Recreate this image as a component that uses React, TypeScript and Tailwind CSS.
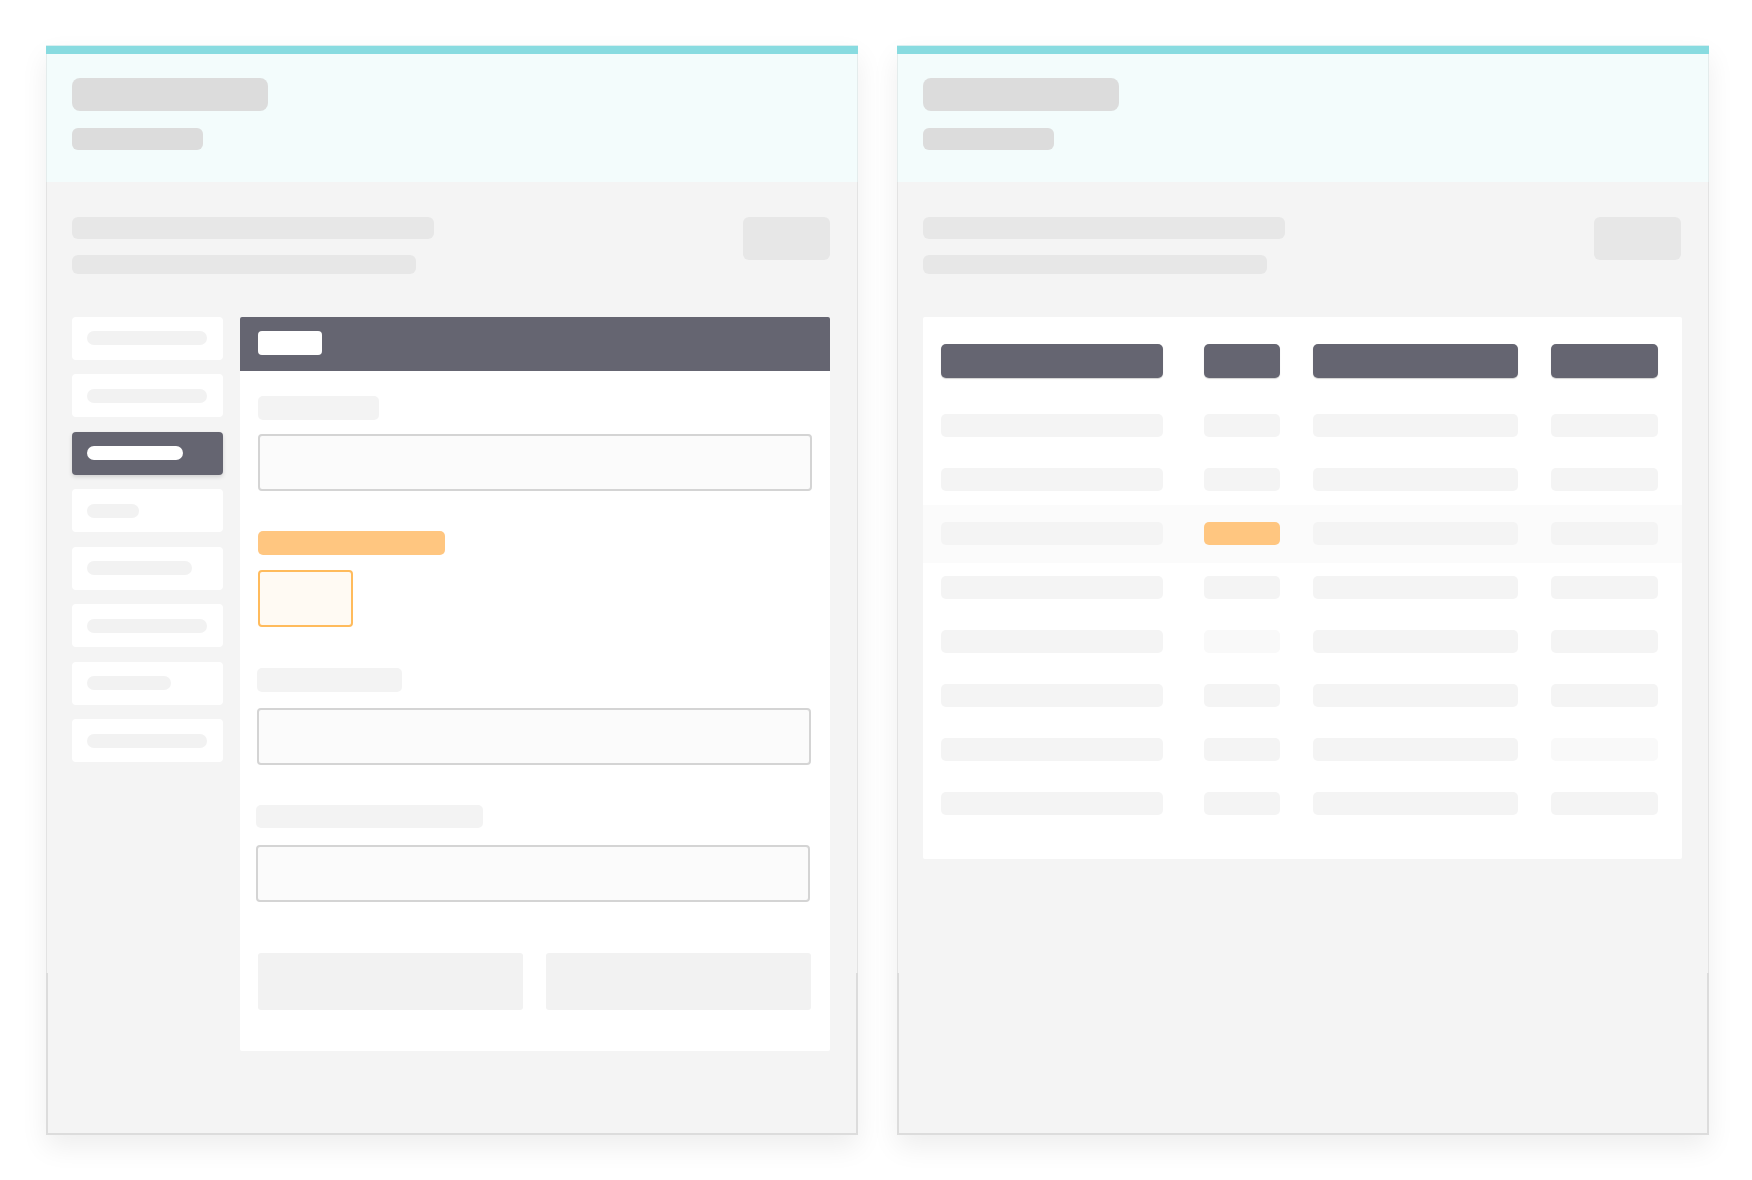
import React from 'react';

// Skeleton wireframe: two app screens side by side (form view + table view)

const sideItems = [
  { width: 'w-[120px]', active: false },
  { width: 'w-[120px]', active: false },
  { width: 'w-[96px]', active: true },
  { width: 'w-[52px]', active: false },
  { width: 'w-[105px]', active: false },
  { width: 'w-[120px]', active: false },
  { width: 'w-[84px]', active: false },
  { width: 'w-[120px]', active: false },
];

// cell tone per row: 'n' normal, 'f' faded, 'o' orange
const tableRows: string[][] = [
  ['n', 'n', 'n', 'n'],
  ['n', 'n', 'n', 'n'],
  ['n', 'o', 'n', 'n'],
  ['n', 'n', 'n', 'n'],
  ['n', 'f', 'n', 'n'],
  ['n', 'n', 'n', 'n'],
  ['n', 'n', 'n', 'f'],
  ['n', 'n', 'n', 'n'],
];

const colClasses = [
  'w-[222.5px]',
  'w-[76px] ml-[40.5px]',
  'w-[205px] ml-[33px]',
  'w-[107px] ml-[33.5px]',
];

const toneClass: { [key: string]: string } = {
  n: 'bg-[#f4f4f4]',
  f: 'bg-[#f9f9f9]',
  o: 'bg-[#ffc680]',
};

function Panel({ children }: { children: React.ReactNode }) {
  return (
    <div className="relative w-[812.5px] h-[1090px] flex flex-col bg-[#f4f4f4] shadow-[0_12px_26px_rgba(0,0,0,0.07)]">
      <div className="h-[9px] bg-[#88dbe0] border-t border-[#d9eff0]" />
      {/* Header */}
      <div className="h-[128px] bg-[#f3fcfc] border-x border-[#e4ecec] pl-[25.3px] pr-[26px] pt-[24px]">
        <div className="w-[196px] h-[33px] rounded-[8px] bg-[#dcdcdc]" />
        <div className="w-[131px] h-[22px] rounded-[6px] bg-[#dcdcdc] mt-[17px]" />
      </div>
      {/* Body */}
      <div className="flex-1 border-x border-[#e3e3e3] pl-[25.3px] pr-[27px] pt-[35px]">
        <div className="flex justify-between items-start">
          <div className="flex flex-col gap-[16px]">
            <div className="w-[362px] h-[22px] rounded-[6px] bg-[#e7e7e7]" />
            <div className="w-[344px] h-[19px] rounded-[6px] bg-[#e7e7e7]" />
          </div>
          <div className="w-[87px] h-[43px] rounded-[6px] bg-[#e7e7e7]" />
        </div>
        <div className="mt-[43px]">{children}</div>
      </div>
      {/* lower sheet edge */}
      <div className="pointer-events-none absolute inset-x-0 bottom-0 h-[162px] border-x-2 border-b-2 border-[#dcdcdc]" />
    </div>
  );
}

function FieldLabel({ width }: { width: string }) {
  return <div className={`${width} h-[23.5px] rounded-[5px] bg-[#f3f3f3]`} />;
}

function FieldInput() {
  return <div className="w-[554px] h-[57px] rounded-[4px] border-2 border-[#d4d4d4] bg-[#fbfbfb]" />;
}

function FormScreen() {
  return (
    <div className="flex gap-[17px] items-start">
      {/* Sidebar */}
      <div className="w-[151px] flex flex-col gap-[14.5px]">
        {sideItems.map((item, i) => (
          <div
            key={i}
            className={
              item.active
                ? 'h-[43px] rounded-[4px] bg-[#656571] flex items-center pl-[15px] shadow-[0_2px_4px_rgba(0,0,0,0.14)]'
                : 'h-[43px] rounded-[4px] bg-white flex items-center pl-[15px]'
            }
          >
            <div className={`${item.width} h-[14px] rounded-full ${item.active ? 'bg-white' : 'bg-[#f2f2f2]'}`} />
          </div>
        ))}
      </div>

      {/* Main card */}
      <div className="w-[590px] bg-white rounded-[2px]">
        <div className="h-[54px] bg-[#656571] rounded-t-[2px] pl-[18px] pt-[14.5px]">
          <div className="w-[64px] h-[23.5px] rounded-[4px] bg-white" />
        </div>
        <div className="px-[18px] pt-[25.7px] pb-[41px] flex flex-col">
          <FieldLabel width="w-[121px]" />
          <div className="mt-[14.5px]">
            <FieldInput />
          </div>

          <div className="mt-[40px] w-[187px] h-[23.5px] rounded-[5px] bg-[#ffc680]" />
          <div className="mt-[15.6px] w-[95px] h-[57px] rounded-[4px] border-2 border-[#ffbb5c] bg-[#fffaf3]" />

          <div className="mt-[41px] -ml-[1px]">
            <FieldLabel width="w-[145px]" />
            <div className="mt-[15.6px]">
              <FieldInput />
            </div>
          </div>

          <div className="mt-[40px] -ml-[2px]">
            <FieldLabel width="w-[227px]" />
            <div className="mt-[16.8px]">
              <FieldInput />
            </div>
          </div>

          <div className="mt-[51.4px] flex gap-[23.5px]">
            <div className="w-[265px] h-[57px] rounded-[3px] bg-[#f2f2f2]" />
            <div className="w-[265px] h-[57px] rounded-[3px] bg-[#f2f2f2]" />
          </div>
        </div>
      </div>
    </div>
  );
}

function TableScreen() {
  return (
    <div className="w-[759.5px] h-[542px] bg-white rounded-[2px] pt-[27px]">
      <div className="flex pl-[18px] pr-[24px]">
        {colClasses.map((c, i) => (
          <div key={i} className={`${c} h-[34px] rounded-[5px] bg-[#656571] shadow-[0_1px_1px_rgba(0,0,0,0.18)]`} />
        ))}
      </div>
      <div className="mt-[21px] flex flex-col">
        {tableRows.map((row, r) => (
          <div
            key={r}
            className={
              row.includes('o')
                ? 'flex items-center pl-[18px] pr-[24px] h-[58px] -my-[2px] bg-[#fbfbfb]'
                : 'flex items-center pl-[18px] pr-[24px] h-[54px]'
            }
          >
            {row.map((tone, i) => (
              <div key={i} className={`${colClasses[i]} h-[23.5px] rounded-[5px] ${toneClass[tone]}`} />
            ))}
          </div>
        ))}
      </div>
    </div>
  );
}

export default function App() {
  return (
    <div className="w-[1752px] h-[1180px] bg-white flex gap-[38.5px] pl-[45.7px] pt-[44.7px]">
      <Panel>
        <FormScreen />
      </Panel>
      <Panel>
        <TableScreen />
      </Panel>
    </div>
  );
}
